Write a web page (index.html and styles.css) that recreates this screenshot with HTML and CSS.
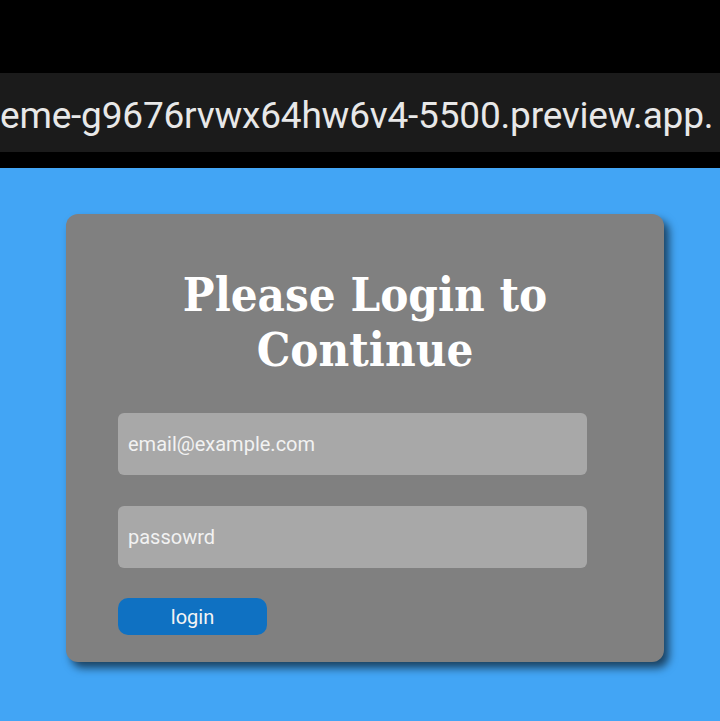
FILE: index.html
```html
<!DOCTYPE html>
<html lang="en">
<head>
<meta charset="utf-8">
<title>Login</title>
<link rel="stylesheet" href="styles.css">
</head>
<body>
<div class="chrome">
  <div class="status"></div>
  <div class="urlbar"><span class="url">eme-g9676rvwx64hw6v4-5500.preview.app.</span></div>
</div>
<main class="page">
  <form class="card">
    <h1 class="title">Please Login to<br>Continue</h1>
    <input class="field" type="email" placeholder="email@example.com">
    <input class="field" type="password" placeholder="passowrd">
    <button class="btn" type="button">login</button>
  </form>
</main>
</body>
</html>
```
FILE: styles.css
```css
html, body {
  margin: 0;
  padding: 0;
}
body {
  background: #42a5f5;
  font-family: Roboto, "Liberation Sans", sans-serif;
  height: 721px;
  overflow: hidden;
}
.chrome {
  background: #000;
  padding-bottom: 16px;
}
.status {
  height: 73px;
}
.urlbar {
  height: 79px;
  background: #1b1b1b;
  overflow: hidden;
  white-space: nowrap;
  display: flex;
  align-items: center;
}
.url {
  font-family: Roboto, sans-serif;
  font-size: 37px;
  letter-spacing: -0.2px;
  color: #e8e8e8;
  padding-top: 6px;
}
.page {
  padding: 46px 0 0 66px;
}
.card {
  width: 598px;
  height: 448px;
  box-sizing: border-box;
  background: #808080;
  border-radius: 12px;
  box-shadow: 5px 6px 9px rgba(0, 0, 0, 0.6);
  padding: 53px 0 0 52px;
  display: flex;
  flex-direction: column;
  align-items: flex-start;
  margin: 0;
}
.title {
  margin: 0 0 36px -52px;
  width: 598px;
  text-align: center;
  font-family: "DejaVu Serif", "Liberation Serif", serif;
  font-stretch: condensed;
  font-weight: bold;
  font-size: 47px;
  line-height: 55px;
  color: #fff;
}
.field {
  width: 469px;
  height: 62px;
  box-sizing: border-box;
  border: none;
  border-radius: 6px;
  background: #a8a8a8;
  padding: 0 10px;
  margin: 0 0 31px 0;
  font-family: Roboto, sans-serif;
  font-size: 20px;
  color: #f2f2f2;
  outline: none;
}
.field::placeholder {
  color: #f2f2f2;
  opacity: 1;
}
.field + .field {
  margin-bottom: 30px;
}
.btn {
  width: 149px;
  height: 37px;
  border: none;
  border-radius: 10px;
  background: #0f71c2;
  color: #f4f4f4;
  font-family: Roboto, sans-serif;
  font-size: 20px;
  padding: 0;
  cursor: pointer;
}
```
